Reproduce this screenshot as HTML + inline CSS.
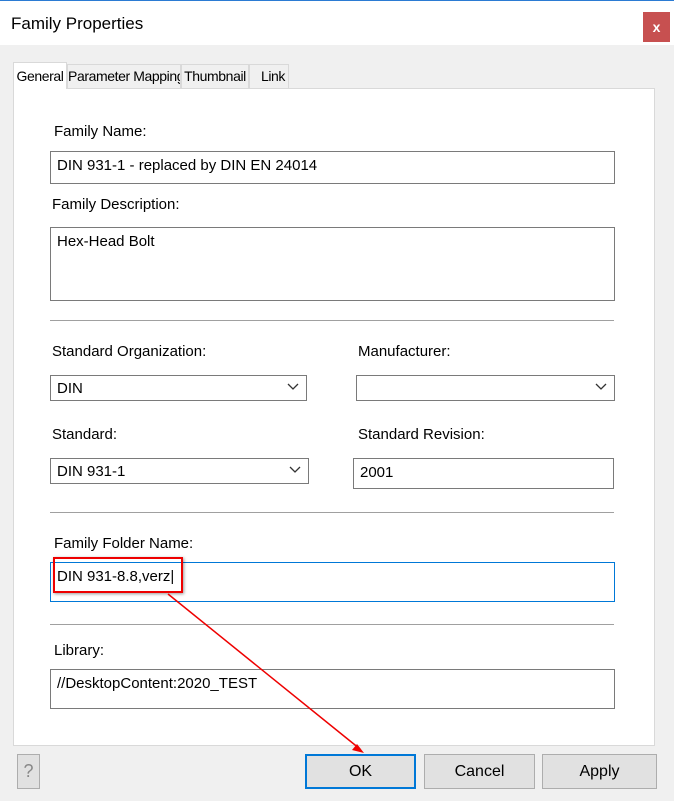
<!DOCTYPE html>
<html><head><style>
body{margin:0;width:674px;height:801px;background:#f0f0f0;font-family:"Liberation Sans",sans-serif;font-size:15px;color:#000;position:relative;overflow:hidden}
.a{position:absolute;white-space:nowrap}
.title{left:0;top:0;width:674px;height:45px;background:#fff;border-top:1px solid #2b7bd3;box-sizing:border-box}
.tab{top:64px;height:24px;border:1px solid #d9d9d9;border-bottom:none;background:#f0f0f0;box-sizing:border-box;text-align:center;line-height:23px;font-size:14px;letter-spacing:-0.4px;overflow:hidden}
.panel{left:13px;top:88px;width:642px;height:658px;background:#fff;border:1px solid #d9d9d9;box-sizing:border-box}
.inp{background:#fff;border:1px solid #7a7a7a;box-sizing:border-box;padding:5px 6px;font-size:15px}
.sep{height:1px;background:#a0a0a0;left:50px;width:564px}
.sel{background:#fff;border:1px solid #7a7a7a;box-sizing:border-box;padding:4px 6px;height:26px}
.btn{top:754px;height:35px;background:#e1e1e1;border:1px solid #adadad;box-sizing:border-box;text-align:center;line-height:33px;font-size:16px}
.chev{position:absolute;right:7px;top:7px}
</style></head><body>
<div class="a title"><div class="a" style="left:11px;top:13px;font-size:17px">Family Properties</div>
<div class="a" style="left:643px;top:11px;width:27px;height:30px;background:#c75050;color:#fff;text-align:center;line-height:30px;font-size:14px;font-weight:bold">x</div></div>
<div class="a panel"></div>
<div class="a tab" style="left:13px;top:62px;width:54px;height:27px;background:#fff;line-height:26px">General</div>
<div class="a tab" style="left:67px;width:114px">Parameter Mapping</div>
<div class="a tab" style="left:181px;width:68px">Thumbnail</div>
<div class="a tab" style="left:249px;width:40px;padding-left:8px">Link</div>

<div class="a" style="left:54px;top:123px">Family Name:</div>
<div class="a inp" style="left:50px;top:151px;width:565px;height:33px">DIN 931-1 - replaced by DIN EN 24014</div>
<div class="a" style="left:52px;top:196px">Family Description:</div>
<div class="a inp" style="left:50px;top:227px;width:565px;height:74px">Hex-Head Bolt</div>
<div class="a sep" style="top:320px"></div>
<div class="a" style="left:52px;top:343px">Standard Organization:</div>
<div class="a" style="left:358px;top:343px">Manufacturer:</div>
<div class="a sel" style="left:50px;top:375px;width:257px">DIN<svg class="chev" width="12" height="8"><path d="M1 1l5 5 5-5" fill="none" stroke="#333" stroke-width="1.3"/></svg></div>
<div class="a sel" style="left:356px;top:375px;width:259px"><svg class="chev" width="12" height="8"><path d="M1 1l5 5 5-5" fill="none" stroke="#333" stroke-width="1.3"/></svg></div>
<div class="a" style="left:52px;top:426px">Standard:</div>
<div class="a" style="left:358px;top:426px">Standard Revision:</div>
<div class="a sel" style="left:50px;top:458px;width:259px">DIN 931-1<svg class="chev" width="12" height="8"><path d="M1 1l5 5 5-5" fill="none" stroke="#333" stroke-width="1.3"/></svg></div>
<div class="a inp" style="left:353px;top:458px;width:261px;height:31px">2001</div>
<div class="a sep" style="top:512px"></div>
<div class="a" style="left:54px;top:535px">Family Folder Name:</div>
<div class="a inp" style="left:50px;top:562px;width:565px;height:40px;border-color:#0078d7;padding-top:5px">DIN 931-8.8,verz|</div>
<div class="a" style="left:53px;top:557px;width:130px;height:36px;border:2px solid #e00;box-sizing:border-box;box-shadow:1px 1px 3px rgba(0,0,0,.4)"></div>
<div class="a sep" style="top:624px"></div>
<div class="a" style="left:54px;top:642px">Library:</div>
<div class="a inp" style="left:50px;top:669px;width:565px;height:40px">//DesktopContent:2020_TEST</div>
<svg class="a" style="left:0;top:0" width="674" height="801"><line x1="168" y1="594" x2="360" y2="749" stroke="#e00" stroke-width="1.5"/><path d="M364 753l-12-3 5-6z" fill="#e00"/></svg>
<div class="a btn" style="left:17px;width:23px;color:#888;font-size:18px">?</div>
<div class="a btn" style="left:305px;width:111px;border:2px solid #0078d7;line-height:31px">OK</div>
<div class="a btn" style="left:424px;width:111px">Cancel</div>
<div class="a btn" style="left:542px;width:115px">Apply</div>
</body></html>
